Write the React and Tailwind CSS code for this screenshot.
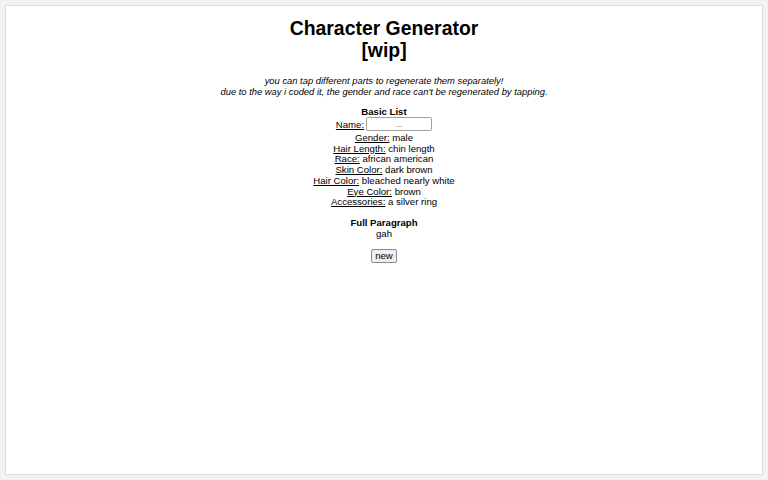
export default function App() {
  const rows = [
    ["Gender:", "male"],
    ["Hair Length:", "chin length"],
    ["Race:", "african american"],
    ["Skin Color:", "dark brown"],
    ["Hair Color:", "bleached nearly white"],
    ["Eye Color:", "brown"],
    ["Accessories:", "a silver ring"],
  ];
  return (
    <div className="h-[480px] w-[768px] bg-[#f2f2f2] p-[5px] font-['Liberation_Sans',Arial,sans-serif] text-black">
      <div className="flex h-[470px] flex-col items-center border border-[#dcdcdc] bg-white pt-[11px] text-center">
        <h1 className="text-[19.4px] font-bold leading-[22px]">
          Character Generator
          <br />
          [wip]
        </h1>
        <div className="mt-[14px] text-[9.4px] italic leading-[11px]">
          <p>you can tap different parts to regenerate them separately!</p>
          <p>due to the way i coded it, the gender and race can't be regenerated by tapping.</p>
        </div>
        <div className="mt-[9px] text-[9.6px] font-bold leading-[11px]">Basic List</div>
        <div className="flex items-center gap-[2px] pb-[2px] text-[9.6px] leading-[11px]">
          <span className="underline">Name:</span>
          <input
            className="h-[14px] w-[66px] rounded-[2px] border border-[#a0a0a0] px-1 text-center text-[9px] leading-[12px] text-[#666] placeholder:text-[#777]"
            placeholder="..."
          />
        </div>
        <div className="text-[9.6px] leading-[10.7px]">
          {rows.map(([k, v]) => (
            <div key={k}>
              <span className="underline">{k}</span> {v}
            </div>
          ))}
        </div>
        <div className="mt-[9px] text-[9.6px] font-bold leading-[11px]">Full Paragraph</div>
        <div className="text-[9.6px] leading-[11px]">gah</div>
        <button className="mt-[10px] h-[14px] rounded-[2px] border border-[#8a8a8a] bg-[#efefef] px-[3px] text-[9.6px] leading-[12px]">
          new
        </button>
      </div>
    </div>
  );
}
